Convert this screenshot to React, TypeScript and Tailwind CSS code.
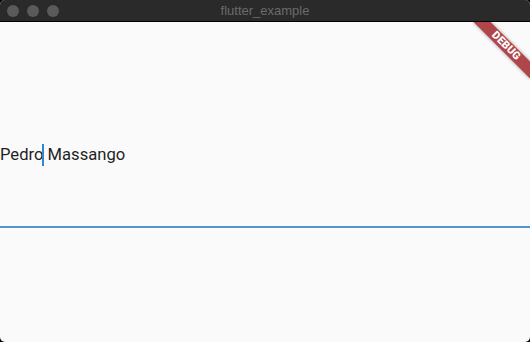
import React from 'react';

const TitleBar: React.FC = () => (
  <div className="relative flex h-[22px] shrink-0 items-center border-b border-black bg-[#2a2a2a] px-[7px]">
    <div className="flex gap-[8px]">
      <span className="h-[12px] w-[12px] rounded-full bg-[#5a5a5a]" />
      <span className="h-[12px] w-[12px] rounded-full bg-[#5a5a5a]" />
      <span className="h-[12px] w-[12px] rounded-full bg-[#5a5a5a]" />
    </div>
    <div className="absolute inset-0 flex items-center justify-center text-[13px] text-[#6b6b6b] [font-family:'Liberation_Sans',Arial,sans-serif]">
      flutter_example
    </div>
  </div>
);

const DebugBanner: React.FC = () => (
  <div className="pointer-events-none absolute inset-0 overflow-hidden">
    <div className="absolute right-[-16px] top-[18px] flex h-[12px] w-[80px] rotate-45 items-center justify-center bg-[#b0454a] shadow-[0_0_4px_rgba(0,0,0,0.35)]">
      <span className="text-[10.8px] font-black leading-none tracking-[0.2px] text-white [font-family:Roboto,sans-serif]">DEBUG</span>
    </div>
  </div>
);

export default function App() {
  return (
    <div className="h-[342px] w-[530px] bg-black">
      <div className="flex h-full w-full flex-col overflow-hidden rounded-[5px] bg-[#fafafa]">
        <TitleBar />
        <div className="relative flex-1">
          <div className="flex flex-col pt-[121px]">
            <div className="relative h-[24px] text-[16.6px] leading-[24px] text-[#1f1f1f] [font-family:Roboto,sans-serif]">
              Pedro Massango
              {/* caret is painted over the text, it takes no room */}
              <span className="absolute left-[42px] top-[1px] h-[22px] w-[2px] bg-[#2f86d4]" />
            </div>
            <div className="mt-[59px] h-[2px] w-full bg-[#5494cb]" />
          </div>
          <DebugBanner />
        </div>
      </div>
    </div>
  );
}
